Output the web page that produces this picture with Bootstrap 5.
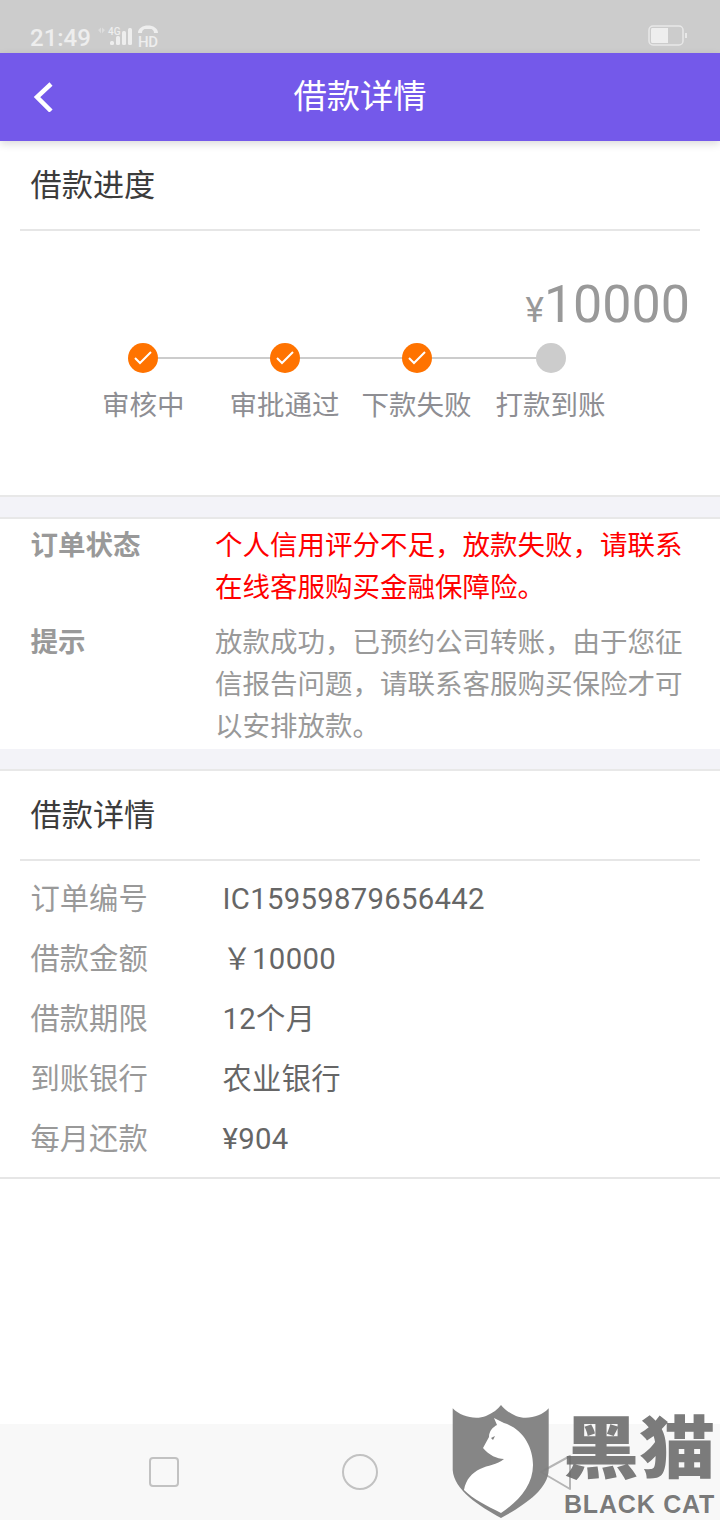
<!DOCTYPE html>
<html lang="zh-CN">

<head>
    <meta charset="UTF-8">
    <meta name="viewport" content="width=device-width, initial-scale=1">
    <title>借款详情</title>
    <link href="https://cdn.jsdelivr.net/npm/bootstrap@5.3.0/dist/css/bootstrap.min.css" rel="stylesheet">
    <style>
        body { font-family: Roboto, "Noto Sans CJK SC", sans-serif; background: #fff; height: 1520px; overflow: hidden; }
        .status-bar { height: 53px; background: #ccc; color: #eee; padding: 21px 32px 0 30px; }
        .status-time { font-size: 24px; line-height: 32px; font-weight: 500; padding-top: 1px; }
        .status-icons { width: 70px; height: 32px; }
        .app-header { height: 88px; background: #7459ea; color: #fff; box-shadow: 0 3px 8px rgba(0, 0, 0, .14); z-index: 2; }
        .back-btn { left: 33px; top: 29px; }
        .app-title { font-size: 33.3px; line-height: 88px; }
        .sec-title { height: 90px; margin: 0 20px; padding-left: 10.5px; font-size: 31.2px; line-height: 89px; color: #3c3c3c; border-bottom: 2px solid #e6e6e6; }
        .progress-box { height: 264px; }
        .amount { padding: 39px 30px 0 0; height: 112px; color: #999; font-size: 52px; line-height: 70px; }
        .amount small { font-size: 35px; }
        .steps { padding-left: 102px; }
        .steps-line { left: 143px; top: 14px; width: 408px; height: 2px; background: #ccc; }
        .step-item { color: #8e8e93; font-size: 27.5px; line-height: 40px; z-index: 1; }
        .step-dot { width: 30px; height: 30px; background: #ff7300; margin-bottom: 13px; }
        .step-dot.off { background: #ccc; }
        .gap-a { margin-right: 45px; }
        .gap-b { margin-right: 22px; }
        .gap-c { margin-right: 24px; }
        .band { height: 24px; background: #f3f3f8; border-top: 2px solid #e8e8e8; border-bottom: 2px solid #e8e8e8; }
        .band-open { height: 22px; border-top: 0; }
        .notes { height: 230px; padding: 6px 36px 0 30.5px; font-size: 27.5px; line-height: 42px; color: #999; }
        .note-label { width: 184.5px; font-weight: 700; }
        .note-red { color: #f00; margin-bottom: 13px; }
        .info-rows { padding: 8px 0 8px 30.5px; border-bottom: 2px solid #e6e6e6; }
        .info-row { height: 60px; line-height: 60px; font-size: 29.3px; }
        .info-label { width: 192px; color: #999; }
        .info-value { color: #666; letter-spacing: .3px; }
        .nav-bar { height: 96px; background: #f8f8f8; gap: 156px; padding-bottom: 1px; }
        .nav-icon { width: 40px; height: 40px; }
        .watermark { right: 0; bottom: 0; width: 272px; height: 116px; color: rgba(105, 105, 105, .88); z-index: 3; }
        .wm-shield { left: 3px; top: 1px; }
        .wm-cn { left: 115px; top: 0; font-size: 68px; line-height: 92px; font-weight: 900; white-space: nowrap; transform: scaleX(1.12); transform-origin: left center; }
        .wm-en { left: 116px; top: 84px; font-family: "Liberation Sans", sans-serif; font-size: 25px; line-height: 32px; font-weight: 700; letter-spacing: .8px; white-space: nowrap; }
    </style>
</head>

<body class="d-flex flex-column position-relative">
    <div class="status-bar d-flex justify-content-between flex-shrink-0">
        <div class="d-flex align-items-start">
            <span class="status-time">21:49</span>
            <svg class="status-icons ms-1" viewBox="0 0 70 32" fill="#eee">
                <path d="M3 9l3-2.5v6zM10 9l-3-2.5v6z" opacity=".5" />
                <text x="13" y="14" font-family="Roboto" font-size="10" font-weight="500">4G</text>
                <rect x="15" y="20" width="4" height="4" rx="1.5" />
                <rect x="21" y="15" width="4" height="9" rx="1.5" />
                <rect x="27" y="10" width="4" height="14" rx="1.5" />
                <rect x="33" y="7" width="4" height="17" rx="1.5" />
                <path d="M43 12c0-10 20-10 20 0h-4c0-2.5-1-3-2.5-4h-7c-1.500 1-2.500 1.500-2.500 4z" />
                <text x="43" y="26" font-family="Roboto" font-size="15" font-weight="500" textLength="20">HD</text>
            </svg>
        </div>
        <svg width="40" height="22" viewBox="0 0 40 22" class="mt-1">
            <rect x="1" y="1" width="34" height="19" rx="4" fill="none" stroke="#e8e8e8" stroke-width="1.5" />
            <path d="M4 3h16v15H4q-1 0-1-2V5q0-2 1-2z" fill="#eee" />
            <rect x="37" y="8" width="2" height="5" fill="#e8e8e8" />
        </svg>
    </div>

    <header class="app-header position-relative text-center flex-shrink-0">
        <svg class="back-btn position-absolute" width="22" height="30" viewBox="0 0 22 30" fill="none" stroke="#fff" stroke-width="4.5">
            <path d="M18 2L4 15l14 14" />
        </svg>
        <div class="app-title">借款详情</div>
    </header>

    <div class="sec-title flex-shrink-0">借款进度</div>
    <div class="progress-box flex-shrink-0">
        <div class="amount text-end"><small>¥</small>10000</div>
        <div class="steps position-relative d-flex">
            <div class="steps-line position-absolute"></div>
            <div class="step-item gap-a d-flex flex-column align-items-center">
                <div class="step-dot rounded-circle d-flex align-items-center justify-content-center">
                    <svg width="20" height="16" viewBox="0 0 20 16" fill="none" stroke="#fff" stroke-width="2"><path d="M2 8l5 5L18 2" /></svg>
                </div>审核中
            </div>
            <div class="step-item gap-b d-flex flex-column align-items-center">
                <div class="step-dot rounded-circle d-flex align-items-center justify-content-center">
                    <svg width="20" height="16" viewBox="0 0 20 16" fill="none" stroke="#fff" stroke-width="2"><path d="M2 8l5 5L18 2" /></svg>
                </div>审批通过
            </div>
            <div class="step-item gap-c d-flex flex-column align-items-center">
                <div class="step-dot rounded-circle d-flex align-items-center justify-content-center">
                    <svg width="20" height="16" viewBox="0 0 20 16" fill="none" stroke="#fff" stroke-width="2"><path d="M2 8l5 5L18 2" /></svg>
                </div>下款失败
            </div>
            <div class="step-item d-flex flex-column align-items-center">
                <div class="step-dot off rounded-circle"></div>打款到账
            </div>
        </div>
    </div>

    <div class="band flex-shrink-0"></div>

    <div class="notes flex-shrink-0">
        <div class="d-flex">
            <div class="note-label flex-shrink-0">订单状态</div>
            <div class="note-red">个人信用评分不足，放款失败，请联系在线客服购买金融保障险。</div>
        </div>
        <div class="d-flex">
            <div class="note-label flex-shrink-0">提示</div>
            <div>放款成功，已预约公司转账，由于您征信报告问题，请联系客服购买保险才可以安排放款。</div>
        </div>
    </div>

    <div class="band band-open flex-shrink-0"></div>

    <div class="sec-title flex-shrink-0">借款详情</div>
    <div class="info-rows flex-shrink-0">
        <div class="info-row d-flex"><div class="info-label">订单编号</div><div class="info-value">IC15959879656442</div></div>
        <div class="info-row d-flex"><div class="info-label">借款金额</div><div class="info-value">￥10000</div></div>
        <div class="info-row d-flex"><div class="info-label">借款期限</div><div class="info-value">12个月</div></div>
        <div class="info-row d-flex"><div class="info-label">到账银行</div><div class="info-value">农业银行</div></div>
        <div class="info-row d-flex"><div class="info-label">每月还款</div><div class="info-value">¥904</div></div>
    </div>

    <div class="flex-grow-1"></div>

    <div class="nav-bar d-flex align-items-center justify-content-center flex-shrink-0">
        <svg class="nav-icon" viewBox="0 0 40 40" fill="none" stroke="#c2c2c2" stroke-width="2"><rect x="6" y="6" width="28" height="28" rx="3" /></svg>
        <svg class="nav-icon" viewBox="0 0 40 40" fill="none" stroke="#c2c2c2" stroke-width="2"><circle cx="20" cy="20" r="17" /></svg>
        <svg class="nav-icon" viewBox="0 0 40 40" fill="none" stroke="#b5b5b5" stroke-width="2" stroke-linejoin="round"><path d="M34 4v33L5 20z" /></svg>
    </div>

    <div class="watermark position-absolute">
        <svg class="wm-shield position-absolute" width="100" height="115" viewBox="0 0 100 115">
            <path d="M1.7 3.300C10 12 25 15 35 11 42 8 47 4 50 0c3 4 8 8 15 11 10 4 25 1 32.7-7.700V65C97 85 72 101 50 113 28 101 3 85 1.7 65z" fill="#808080" fill-opacity=".95" />
            <path d="M43 13L53 18C72 24 82 42 82 60C82 80 68 96 50 108C36 101 22 94 13 85C15 74 21 68 29 64C37 60 46 60 53 54C46 54 38 50 32 43L38 32C38 26 42 22 46 20Z" fill="#fff" />
            <path d="M40 33l4-2-2 4z" fill="#808080" />
        </svg>
        <div class="wm-cn position-absolute">黑猫</div>
        <div class="wm-en position-absolute">BLACK CAT</div>
    </div>

    <script src="https://cdn.jsdelivr.net/npm/bootstrap@5.3.0/dist/js/bootstrap.bundle.min.js"></script>
</body>

</html>
